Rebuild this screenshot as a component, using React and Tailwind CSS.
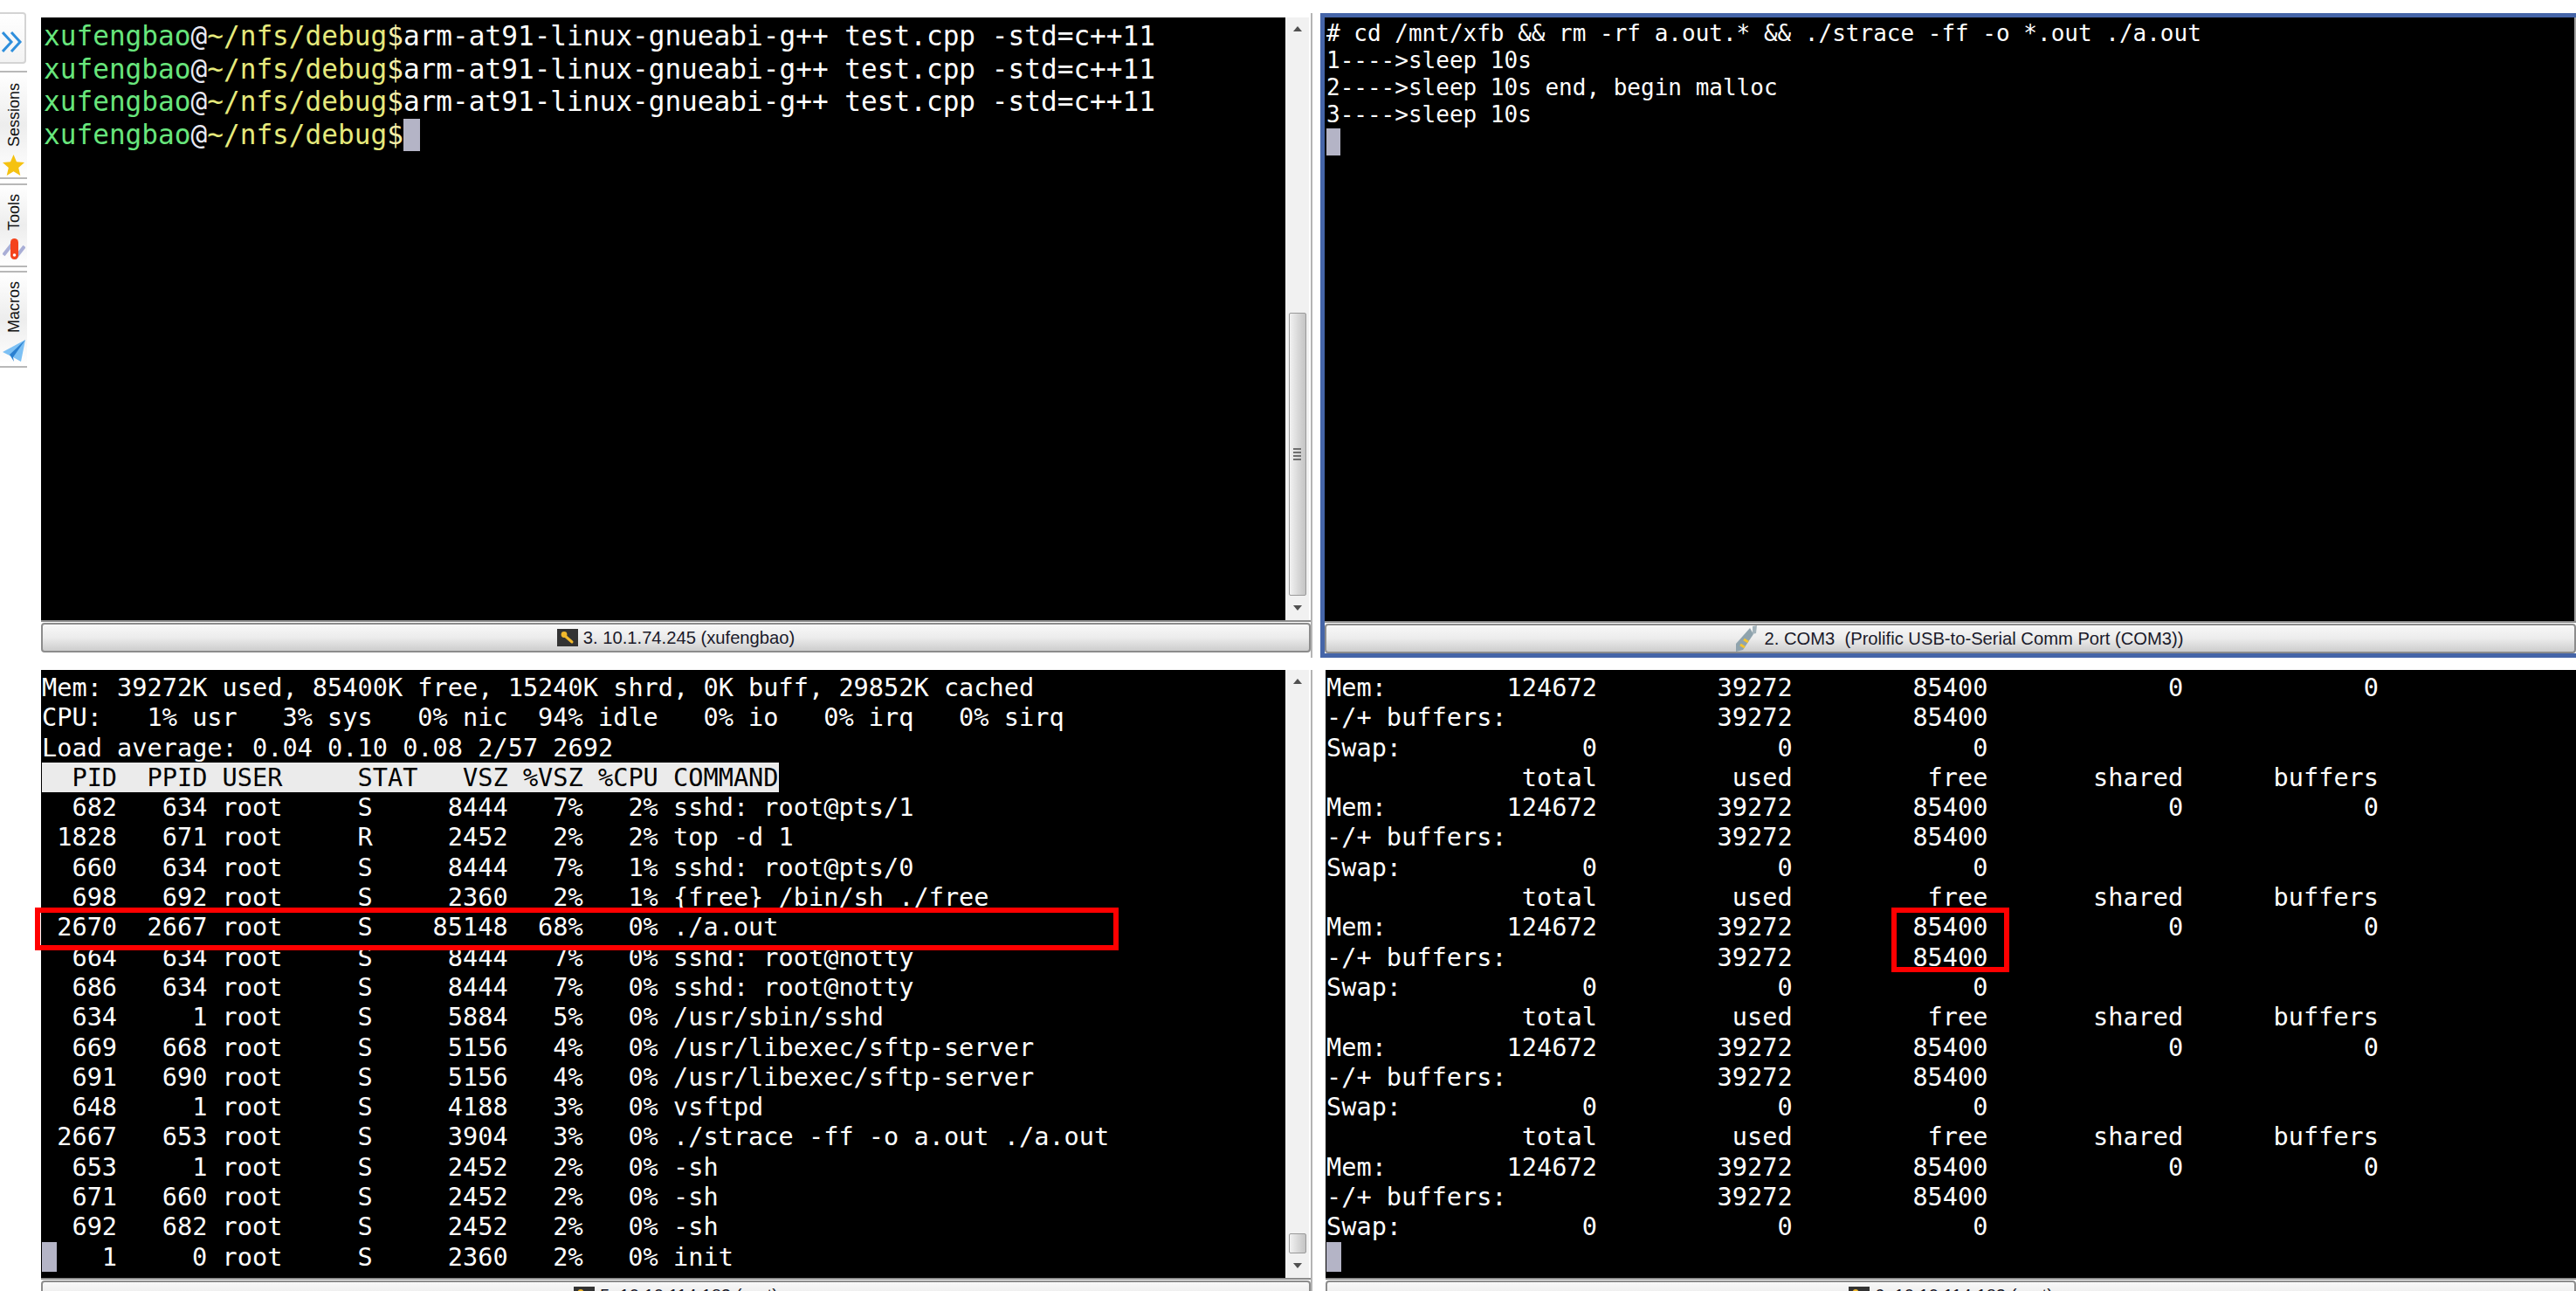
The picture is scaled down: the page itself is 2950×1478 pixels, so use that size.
import React from 'react';

const mono = "font-['DejaVu_Sans_Mono',monospace] whitespace-pre text-white";

// top rows: pid, ppid, stat, vsz, %vsz, %cpu, command
const procs = [
  [682, 634, 'S', 8444, '7%', '2%', 'sshd: root@pts/1'],
  [1828, 671, 'R', 2452, '2%', '2%', 'top -d 1'],
  [660, 634, 'S', 8444, '7%', '1%', 'sshd: root@pts/0'],
  [698, 692, 'S', 2360, '2%', '1%', '{free} /bin/sh ./free'],
  [2670, 2667, 'S', 85148, '68%', '0%', './a.out'],
  [664, 634, 'S', 8444, '7%', '0%', 'sshd: root@notty'],
  [686, 634, 'S', 8444, '7%', '0%', 'sshd: root@notty'],
  [634, 1, 'S', 5884, '5%', '0%', '/usr/sbin/sshd'],
  [669, 668, 'S', 5156, '4%', '0%', '/usr/libexec/sftp-server'],
  [691, 690, 'S', 5156, '4%', '0%', '/usr/libexec/sftp-server'],
  [648, 1, 'S', 4188, '3%', '0%', 'vsftpd'],
  [2667, 653, 'S', 3904, '3%', '0%', './strace -ff -o a.out ./a.out'],
  [653, 1, 'S', 2452, '2%', '0%', '-sh'],
  [671, 660, 'S', 2452, '2%', '0%', '-sh'],
  [692, 682, 'S', 2452, '2%', '0%', '-sh'],
  [1, 0, 'S', 2360, '2%', '0%', 'init'],
];

const procLine = ([pid, ppid, stat, vsz, pv, pc, cmd]) =>
  String(pid).padStart(5) +
  String(ppid).padStart(6) +
  ' root     ' +
  stat.padEnd(4) +
  String(vsz).padStart(6) +
  pv.padStart(5) +
  pc.padStart(5) +
  ' ' +
  cmd;

const freeRow = (label, vals) =>
  label.padEnd(5) + vals.map((v) => v.padStart(13)).join('');

const memRows = [
  freeRow('Mem:', ['124672', '39272', '85400', '0', '0']),
  '-/+ buffers:'.padEnd(26) + '39272' + '85400'.padStart(13),
  freeRow('Swap:', ['0', '0', '0']),
];
const freeHeader = freeRow('', ['total', 'used', 'free', 'shared', 'buffers']);
const freeLines = [
  ...memRows,
  freeHeader, ...memRows,
  freeHeader, ...memRows,
  freeHeader, ...memRows,
  freeHeader, ...memRows,
];

const Cursor = ({ className }) => <span className={`inline-block bg-[#b4b4c6] ${className}`} />;

const Prompt = ({ cmd }) => (
  <div className="h-[37.5px]">
    <span className="text-[#68e67c]">xufengbao</span>
    <span className="text-[#e8e8f4]">@</span>
    <span className="text-[#e6ea7c]">~/nfs/debug</span>
    <span className="text-[#f4eea8]">$</span>
    {cmd}
  </div>
);

const Scrollbar = ({ thumb, grip }) => (
  <div className="w-[27px] flex flex-col items-center bg-[#f1f1f1]">
    <div className="h-[26px] w-full flex items-center justify-center shrink-0">
      <div className="w-0 h-0 border-x-[5px] border-x-transparent border-b-[6px] border-b-[#505050]" />
    </div>
    <div className="flex-1" />
    <div className={`${thumb} w-[20px] shrink-0 flex flex-col items-center justify-center gap-[2px] rounded-[2px] border border-[#9a9a9a] bg-linear-to-r from-[#f2f2f2] via-[#dadada] to-[#c4c4c4]`}>
      {grip && (
        <>
          <div className="w-[9px] h-[2px] bg-[#707070]" />
          <div className="w-[9px] h-[2px] bg-[#707070]" />
          <div className="w-[9px] h-[2px] bg-[#707070]" />
          <div className="w-[9px] h-[2px] bg-[#707070]" />
        </>
      )}
    </div>
    <div className="h-[28px] w-full flex items-center justify-center shrink-0">
      <div className="w-0 h-0 border-x-[5px] border-x-transparent border-t-[6px] border-t-[#505050]" />
    </div>
  </div>
);

const KeyIcon = () => (
  <span className="w-[24px] h-[20px] shrink-0 flex items-center justify-center bg-[#333333]">
    <svg width="18" height="16" viewBox="0 0 18 16">
      <circle cx="5" cy="4.5" r="3.4" fill="#f2b92c" />
      <path d="M6 6 L14 13" stroke="#f2b92c" strokeWidth="3" strokeLinecap="round" />
    </svg>
  </span>
);

const PlugIcon = () => (
  <svg width="28" height="30" viewBox="0 0 28 30" className="shrink-0">
    <path d="M2 30 L2 21 L18 3 L22 10 L10 28 Z" fill="#8fa3ad" />
    <path d="M21 1 L26 0 L25 9 L21 10 Z" fill="#a3b3bb" />
    <path d="M7 22 L12 25 M11 16 L16 19" stroke="#f4c430" strokeWidth="3" />
  </svg>
);

const Tab = ({ icon, label, className = '' }) => (
  <div className="h-[37px] shrink-0 border-t-2 border-[#8c8c8c] pt-px">
    <div className={`h-[34px] rounded-[4px] border-2 border-[#8c8c8c] bg-linear-to-b from-[#f8f8f8] via-[#ececec] to-[#cdcdcd] flex items-center justify-center gap-[6px] text-[20.2px] text-[#1a1a2a] font-['Liberation_Sans',sans-serif] whitespace-pre ${className}`}>
      {icon}
      <span>{label}</span>
    </div>
  </div>
);

function Sidebar() {
  return (
    <div className="w-[47px] shrink-0 flex flex-col items-start pt-[14px]">
      <div className="w-[30px] h-[59px] rounded-r-[4px] border-2 border-l-0 border-[#d4d4d4] bg-linear-to-b from-white to-[#f3f3f3] flex items-end justify-center pb-[10px]">
        <svg width="24" height="26" viewBox="0 0 24 26" fill="none" stroke="#2f8fdc" strokeWidth="3">
          <path d="M1 2 L11 13 L1 24" />
          <path d="M11 2 L21 13 L11 24" />
        </svg>
      </div>
      <div className="mt-[8px] w-[31px] h-[124px] border-y-2 border-[#b8b8b8] bg-linear-to-b from-white via-[#ededed] to-white flex flex-col items-center pt-[12px] gap-[9px]">
        <span className="[writing-mode:vertical-rl] rotate-180 text-[18px] leading-[18px] text-[#111] font-['Liberation_Sans',sans-serif]">Sessions</span>
        <svg width="25" height="24" viewBox="0 0 25 24" className="shrink-0">
          <path d="M12.5 0 L16 8.2 L25 9 L18.2 15 L20.3 24 L12.5 19.2 L4.7 24 L6.8 15 L0 9 L9 8.2 Z" fill="#f5c211" />
        </svg>
      </div>
      <div className="mt-[5px] w-[31px] h-[96px] border-y-2 border-[#b8b8b8] bg-linear-to-b from-white via-[#ededed] to-white flex flex-col items-center pt-[10px] gap-[8px]">
        <span className="[writing-mode:vertical-rl] rotate-180 text-[18px] leading-[18px] text-[#111] font-['Liberation_Sans',sans-serif]">Tools</span>
        <svg width="26" height="26" viewBox="0 0 26 26" className="shrink-0">
          <path d="M1 20 L12 6 M14 24 L25 10" stroke="#a9aed6" strokeWidth="4" />
          <rect x="9" y="1" width="9" height="24" rx="4.5" fill="#f4431c" />
          <circle cx="13.5" cy="20" r="1.8" fill="#ffffff" />
        </svg>
      </div>
      <div className="mt-[4px] w-[31px] h-[111px] border-y-2 border-[#b8b8b8] bg-linear-to-b from-white via-[#ededed] to-white flex flex-col items-center pt-[10px] gap-[8px]">
        <span className="[writing-mode:vertical-rl] rotate-180 text-[18px] leading-[18px] text-[#111] font-['Liberation_Sans',sans-serif]">Macros</span>
        <svg width="26" height="26" viewBox="0 0 26 26" className="shrink-0">
          <path d="M0 14 L26 0 L21 25 L12 20 Z" fill="#7cc0f4" />
          <path d="M8 17 L26 0 L12 20 L13 25 Z" fill="#2b80d0" />
        </svg>
      </div>
    </div>
  );
}

export default function App() {
  return (
    <div className="w-[2950px] h-[1478px] bg-white flex overflow-hidden relative">
      <Sidebar />
      <div className="flex-1 flex flex-col pt-[15px]">
        {/* top row */}
        <div className="h-[738px] flex shrink-0">
          <div className="w-[1456px] flex flex-col pt-[5px] border-r-2 border-[#b4b4b4]">
            <div className="flex-1 flex min-h-0 border-r-2 border-white">
              <div className={`${mono} flex-1 bg-black pl-[3px] pt-[3px] text-[31.1px] leading-[37.5px]`}>
                <Prompt cmd="arm-at91-linux-gnueabi-g++ test.cpp -std=c++11" />
                <Prompt cmd="arm-at91-linux-gnueabi-g++ test.cpp -std=c++11" />
                <Prompt cmd="arm-at91-linux-gnueabi-g++ test.cpp -std=c++11" />
                <Prompt cmd={<Cursor className="w-[19px] h-[37px] align-top" />} />
              </div>
              <Scrollbar thumb="h-[324px]" grip />
            </div>
            <Tab icon={<KeyIcon />} label="3. 10.1.74.245 (xufengbao)" />
            <div className="h-[6px] shrink-0" />
          </div>
          <div className="ml-[9px] flex-1 flex flex-col border-[5px] border-r-0 border-[#4565a8]">
            <div className={`${mono} flex-1 bg-black pl-[2px] pt-[3px] text-[26px] leading-[31px] border-r-2 border-[#a0a0a0]`}>
              <div># cd /mnt/xfb && rm -rf a.out.* && ./strace -ff -o *.out ./a.out</div>
              <div>1----&gt;sleep 10s</div>
              <div>2----&gt;sleep 10s end, begin malloc</div>
              <div>3----&gt;sleep 10s</div>
              <Cursor className="w-[16px] h-[31px] align-top" />
            </div>
            <Tab icon={<PlugIcon />} label="2. COM3  (Prolific USB-to-Serial Comm Port (COM3))" className="pl-[20px]" />
          </div>
        </div>

        {/* bottom row */}
        <div className="mt-[14px] flex-1 flex min-h-0">
          <div className="w-[1456px] flex flex-col border-r-2 border-[#b4b4b4]">
            <div className="h-[696px] shrink-0 flex border-r-2 border-white">
              <div className={`${mono} flex-1 bg-black pl-px pt-[3px] text-[28.6px] leading-[34.3px]`}>
                <div>Mem: 39272K used, 85400K free, 15240K shrd, 0K buff, 29852K cached</div>
                <div>CPU:   1% usr   3% sys   0% nic  94% idle   0% io   0% irq   0% sirq</div>
                <div>Load average: 0.04 0.10 0.08 2/57 2692</div>
                <div className="w-fit bg-[#ebebeb] text-black">  PID  PPID USER     STAT   VSZ %VSZ %CPU COMMAND</div>
                {procs.slice(0, -1).map((p) => (
                  <div key={p[0]}>{procLine(p)}</div>
                ))}
                <div className="flex">
                  <Cursor className="w-[17.2px] h-[34px]" />
                  <span>{procLine(procs[procs.length - 1]).slice(1)}</span>
                </div>
              </div>
              <Scrollbar thumb="h-[23px]" />
            </div>
            <Tab icon={<KeyIcon />} label="5. 10.10.114.183 (root)" />
          </div>
          <div className="ml-[9px] pl-[6px] flex-1 flex flex-col">
            <div className={`${mono} h-[696px] shrink-0 bg-black pl-px pt-[3px] text-[28.6px] leading-[34.3px]`}>
              {freeLines.map((line, i) => (
                <div key={i}>{line}</div>
              ))}
              <Cursor className="w-[17px] h-[34px] align-top" />
            </div>
            <Tab icon={<KeyIcon />} label="6. 10.10.114.183 (root)" />
          </div>
        </div>
      </div>

      {/* red highlight boxes drawn over the screenshot */}
      <div className="absolute left-[40px] top-[1039px] w-[1241px] h-[49px] border-[6px] border-[#ff0000]" />
      <div className="absolute left-[2166px] top-[1039px] w-[135px] h-[74px] border-[6px] border-[#ff0000]" />
    </div>
  );
}
